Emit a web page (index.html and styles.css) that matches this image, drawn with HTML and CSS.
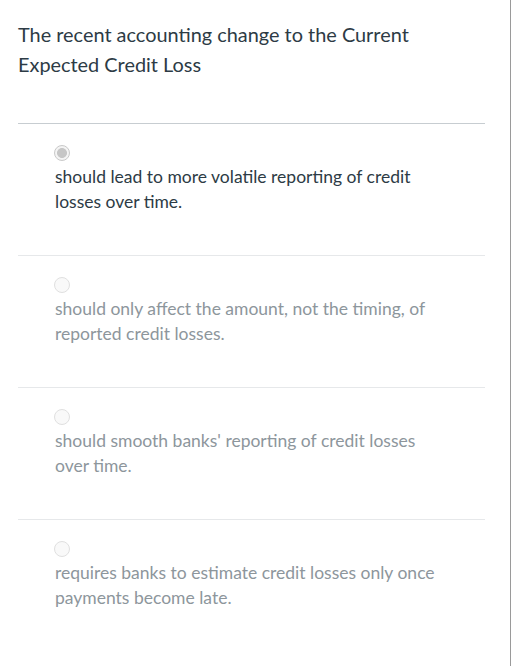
FILE: index.html
```html
<!DOCTYPE html>
<html lang="en">
<head>
<meta charset="utf-8">
<title>Question</title>
<link rel="stylesheet" href="styles.css">
</head>
<body>
<div class="frame">
  <div class="question">
    <h2 class="question-text">The recent accounting change to the Current Expected Credit Loss</h2>
    <div class="answers">
      <div class="answer answer-selected">
        <span class="radio radio-checked"></span>
        <div class="answer-text">should lead to more volatile reporting of credit losses over time.</div>
      </div>
      <div class="answer">
        <span class="radio"></span>
        <div class="answer-text">should only affect the amount, not the timing, of reported credit losses.</div>
      </div>
      <div class="answer">
        <span class="radio"></span>
        <div class="answer-text">should smooth banks' reporting of credit losses over time.</div>
      </div>
      <div class="answer">
        <span class="radio"></span>
        <div class="answer-text">requires banks to estimate credit losses only once payments become late.</div>
      </div>
    </div>
  </div>
</div>
</body>
</html>
```
FILE: styles.css
```css
html, body {
  margin: 0;
  padding: 0;
  background: #ffffff;
}
body {
  font-family: Lato, "Open Sans", "Liberation Sans", sans-serif;
  color: #2d3b45;
}
.frame {
  width: 511px;
  min-height: 666px;
  box-sizing: border-box;
  border-right: 1px solid #9a9a9a;
  padding: 19px 25px 0 18px;
}
.question-text {
  margin: 0 0 44px 0;
  font-size: 19.9px;
  line-height: 30px;
  font-weight: 400;
  color: #2d3b45;
}
.answer {
  border-top: 1px solid #e6e8ea;
  padding: 21px 0 41px 37px;
}
.answer-selected {
  border-top-color: #c7cdd1;
}
.radio {
  display: block;
  width: 16px;
  height: 16px;
  box-sizing: border-box;
  border-radius: 50%;
  border: 1px solid #e0e0e0;
  background: #f9f9f9;
  margin: 0 0 3px -1px;
}
.radio-checked {
  border-color: #c9c9c9;
  background: radial-gradient(circle, #c6c6c6 0 4.6px, #f4f4f4 5.3px);
}
.answer-text {
  max-width: 390px;
  font-size: 17.5px;
  line-height: 25px;
  color: #8d969c;
}
.answer-selected .answer-text {
  color: #2d3b45;
}
```
